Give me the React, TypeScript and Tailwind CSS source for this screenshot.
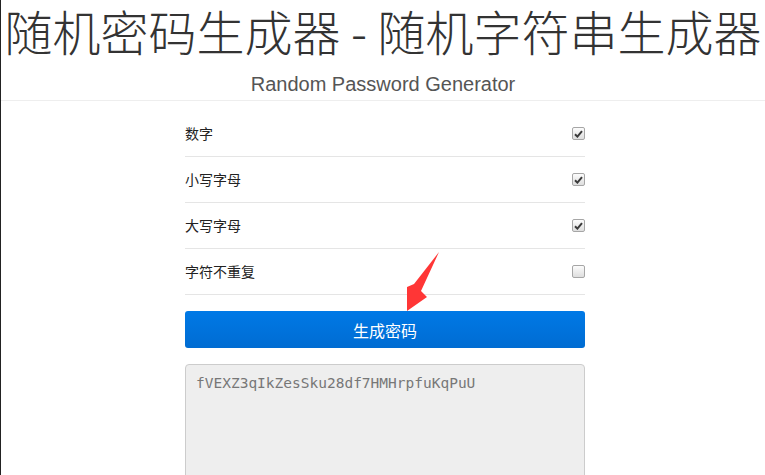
const options = [
  { label: "数字", checked: true },
  { label: "小写字母", checked: true },
  { label: "大写字母", checked: true },
  { label: "字符不重复", checked: false },
];

function Check({ checked }: { checked: boolean }) {
  return (
    <span className="flex h-[13px] w-[13px] items-center justify-center rounded-[2px] border border-[#a6a6a6] bg-gradient-to-b from-[#fcfcfc] to-[#dedede]">
      {checked && (
        <svg width="9" height="8" viewBox="0 0 9 8">
          <path d="M1 4.2 L3.4 6.6 L8 1.2" fill="none" stroke="#3a3a3a" strokeWidth="2" />
        </svg>
      )}
    </span>
  );
}

export default function App() {
  return (
    <div className="relative min-h-[475px] w-[765px] overflow-hidden border-l border-[#222] bg-white font-['Noto_Sans_CJK_SC',sans-serif]">
      <header className="border-b border-[#eee] pb-[1px] pt-[1px] text-center">
        <h1 className="whitespace-nowrap text-[48px] font-light leading-[58px] text-[#333]">
          随机密码生成器 - 随机字符串生成器
        </h1>
        <p className="mt-[10px] font-['Liberation_Sans',sans-serif] text-[20px] leading-[30px] text-[#555]">
          Random Password Generator
        </p>
      </header>

      <div className="ml-[184px] w-[400px] pt-[10px]">
        {options.map((o) => (
          <div
            key={o.label}
            className="flex h-[46px] items-center justify-between border-b border-[#e5e5e5] text-[14px] text-[#222]"
          >
            <span>{o.label}</span>
            <Check checked={o.checked} />
          </div>
        ))}

        <button className="mt-[16px] flex h-[37px] w-full items-center justify-center rounded-[3px] bg-gradient-to-b from-[#0079e6] to-[#006cd2] text-[16px] text-white">
          生成密码
        </button>

        <div className="mt-[16px] h-[160px] rounded-[4px] border border-[#ccc] bg-[#eee] px-[10px] py-[7px] font-['DejaVu_Sans_Mono',monospace] text-[14.5px] leading-[22px] text-[#777]">
          fVEXZ3qIkZesSku28df7HMHrpfuKqPuU
        </div>
      </div>

      <svg className="absolute left-0 top-0" width="765" height="475" viewBox="0 0 765 475">
        <polygon points="438,252 420,291 426,297 406,311 406,287 413,284" fill="#ff3636" />
      </svg>
    </div>
  );
}
